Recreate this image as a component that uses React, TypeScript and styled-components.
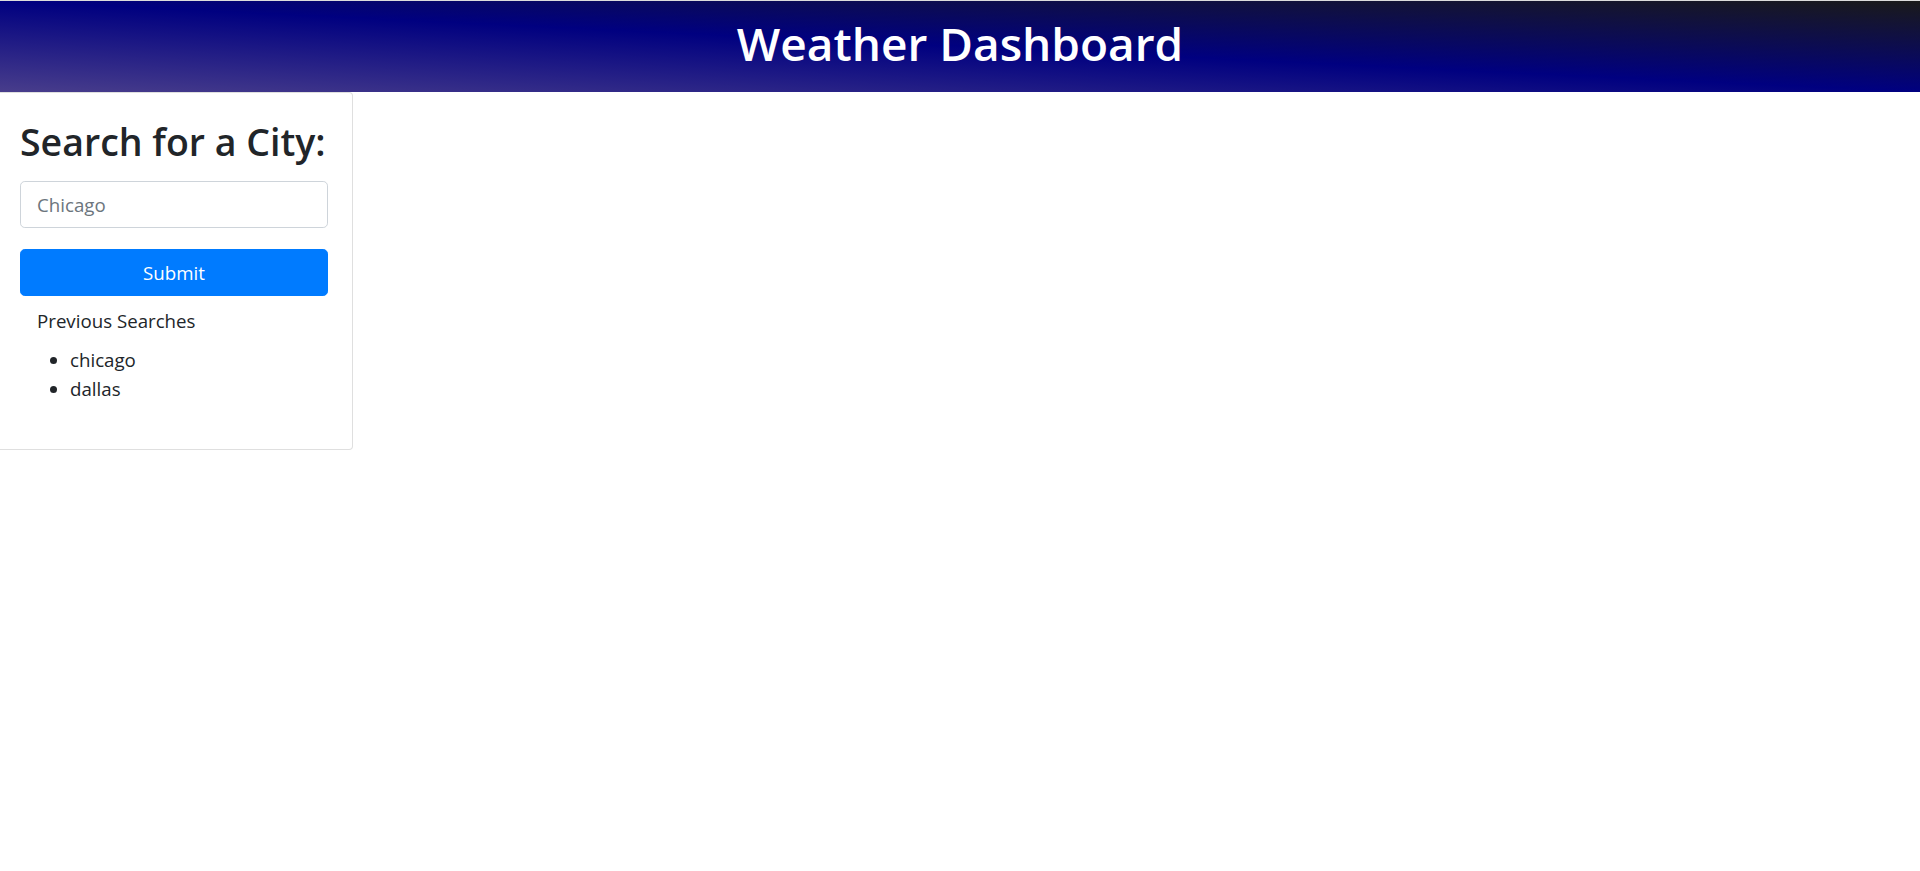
import React from "react";
import styled, { createGlobalStyle } from "styled-components";

const Global = createGlobalStyle`
  html, body { margin: 0; padding: 0; background: #fff; }
  body {
    font-family: "Open Sans", "Noto Sans", sans-serif;
    font-size: 18.7px;
    color: #212529;
  }
  * { box-sizing: border-box; }
`;

const Page = styled.div`
  border-top: 1px solid #dcdcdc;
  min-height: 870px;
`;

const Header = styled.header`
  height: 91px;
  display: flex;
  align-items: center;
  justify-content: center;
  padding-bottom: 5px;
  background: linear-gradient(to top right, #483d8b 0%, #000080 50%, #1a1a1a 100%);
`;

const Title = styled.h1`
  margin: 0;
  color: #fff;
  font-size: 46px;
  font-weight: 600;
  line-height: 1.2;
`;

const Card = styled.section`
  width: 353px;
  border: 1px solid #dfdfdf;
  border-left: none;
  border-radius: 0 4px 4px 0;
  padding: 25px 24px 45px 20px;
`;

const Heading = styled.h2`
  margin: 0 0 15px;
  font-size: 37.5px;
  font-weight: 600;
  line-height: 48px;
  white-space: nowrap;
`;

const CityInput = styled.input`
  display: block;
  width: 100%;
  height: 47px;
  padding: 0 16px;
  border: 1px solid #ced4da;
  border-radius: 4.8px;
  font-family: inherit;
  font-size: 18.7px;
  color: #495057;
  background: #fff;
  outline: none;
  &::placeholder { color: #6c757d; }
`;

const SubmitButton = styled.button`
  display: block;
  width: 100%;
  height: 47px;
  margin-top: 21px;
  border: 1px solid #007bff;
  border-radius: 4.8px;
  background: #007bff;
  color: #fff;
  font-family: inherit;
  font-size: 18.7px;
  cursor: pointer;
`;

const HistoryLabel = styled.p`
  margin: 11px 0 0;
  padding-left: 17px;
  line-height: 28px;
`;

const HistoryList = styled.ul`
  margin: 10px 0 0 10px;
  padding-left: 40px;
  line-height: 29.3px;
`;

const HistoryItem = styled.li``;

const searches = ["chicago", "dallas"];

export default function App() {
  return (
    <>
      <Global />
      <Page>
        <Header>
          <Title>Weather Dashboard</Title>
        </Header>
        <Card>
          <Heading>Search for a City:</Heading>
          <CityInput type="text" placeholder="Chicago" />
          <SubmitButton type="button">Submit</SubmitButton>
          <HistoryLabel>Previous Searches</HistoryLabel>
          <HistoryList>
            {searches.map((s) => (
              <HistoryItem key={s}>{s}</HistoryItem>
            ))}
          </HistoryList>
        </Card>
      </Page>
    </>
  );
}
